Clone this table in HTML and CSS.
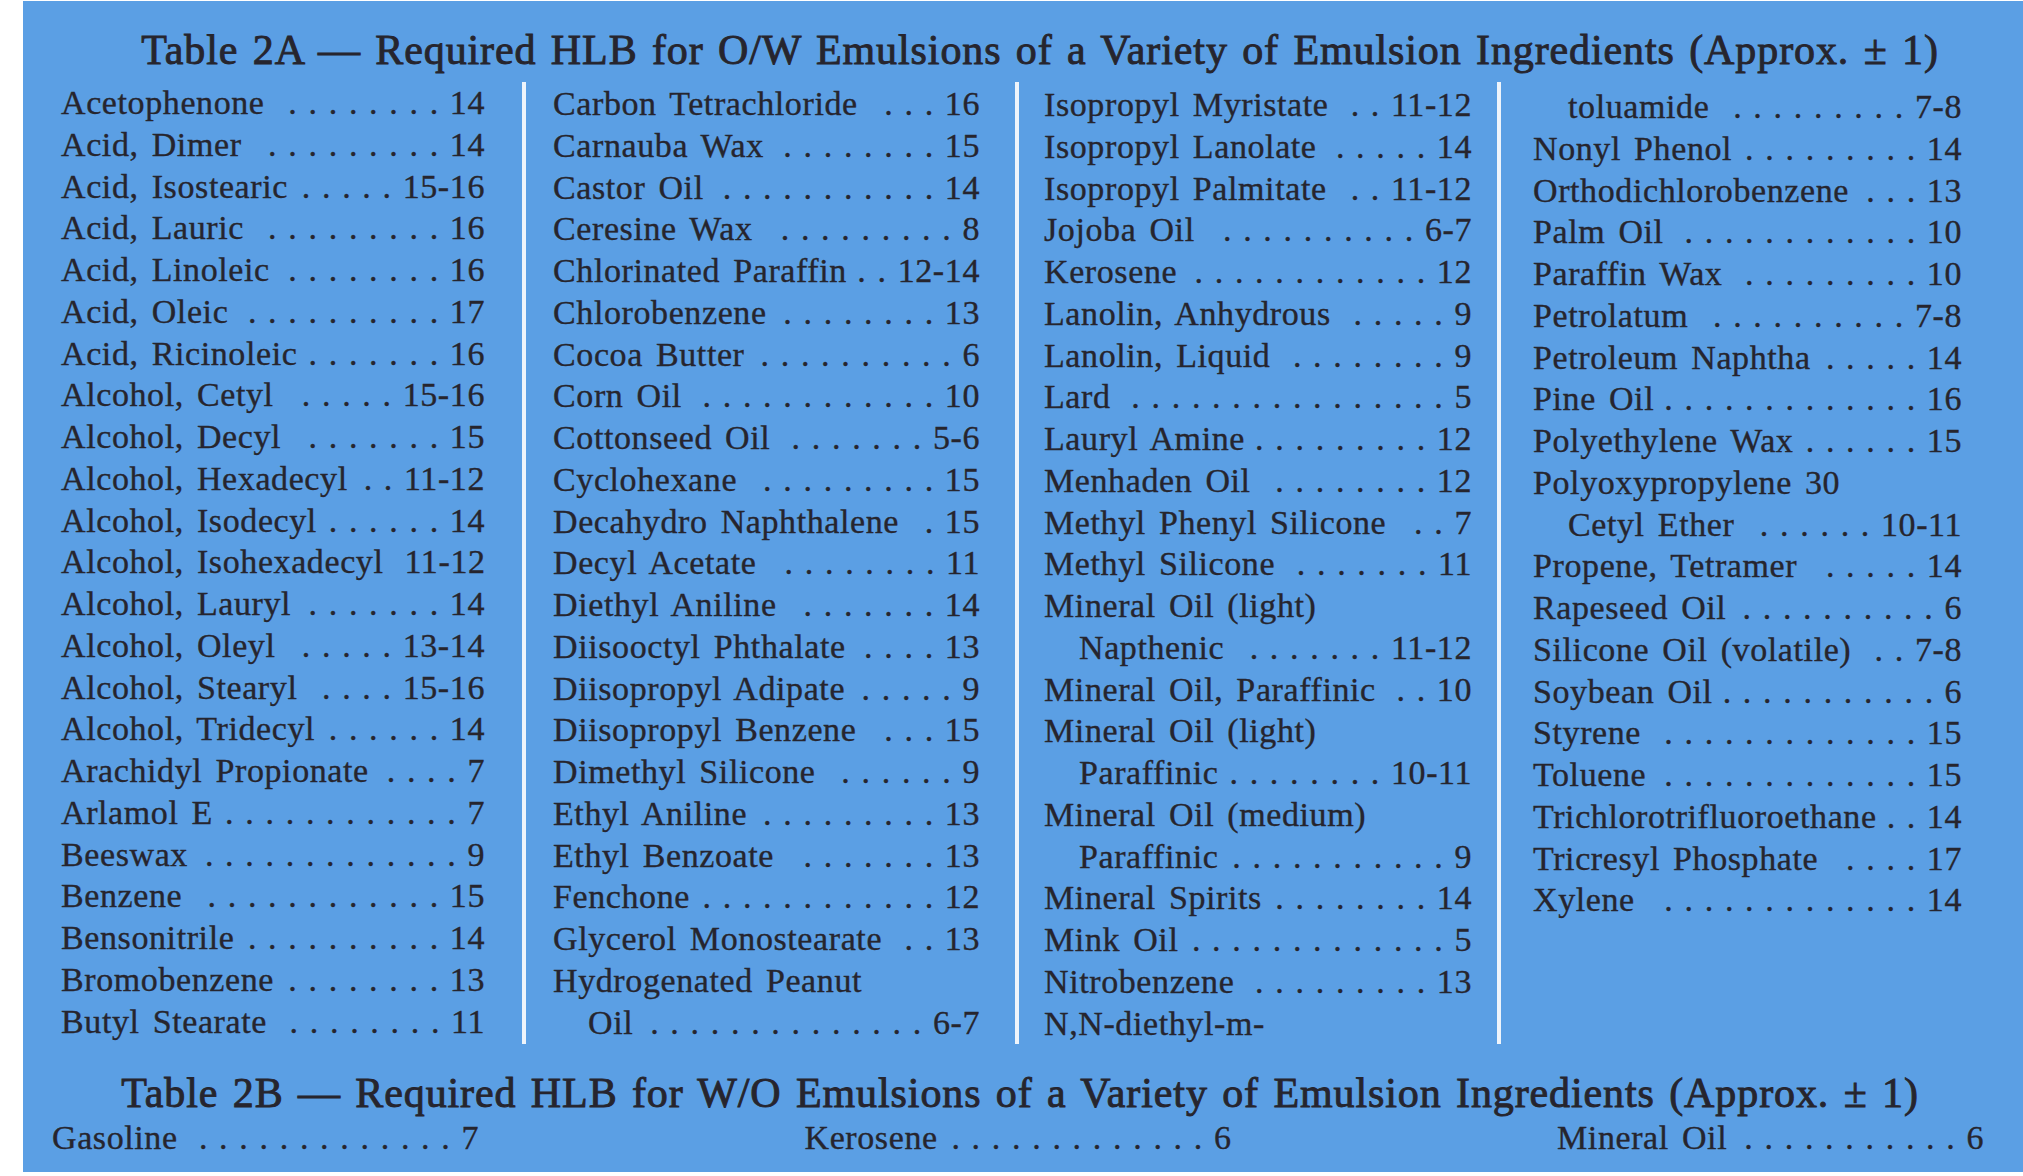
FILE: index.html
```html
<!DOCTYPE html>
<html lang="en">
<head>
<meta charset="utf-8">
<title>Required HLB Tables</title>
<link rel="stylesheet" href="styles.css">
</head>
<body>
<div class="sheet">
  <h1 class="title title-a">Table 2A — Required HLB for O/W Emulsions of a Variety of Emulsion Ingredients (Approx. ± 1)</h1>
  <div class="cols">
    <div class="col c1">
      <div class="row"><span class="name">Acetophenone</span><span class="dots">. . . . . . . .</span><span class="val">14</span></div>
      <div class="row"><span class="name">Acid, Dimer</span><span class="dots">. . . . . . . . .</span><span class="val">14</span></div>
      <div class="row"><span class="name">Acid, Isostearic</span><span class="dots">. . . .</span><span class="val">15-16</span></div>
      <div class="row"><span class="name">Acid, Lauric</span><span class="dots">. . . . . . . . .</span><span class="val">16</span></div>
      <div class="row"><span class="name">Acid, Linoleic</span><span class="dots">. . . . . . . .</span><span class="val">16</span></div>
      <div class="row"><span class="name">Acid, Oleic</span><span class="dots">. . . . . . . . . .</span><span class="val">17</span></div>
      <div class="row"><span class="name">Acid, Ricinoleic</span><span class="dots">. . . . . .</span><span class="val">16</span></div>
      <div class="row"><span class="name">Alcohol, Cetyl</span><span class="dots">. . . . .</span><span class="val">15-16</span></div>
      <div class="row"><span class="name">Alcohol, Decyl</span><span class="dots">. . . . . . .</span><span class="val">15</span></div>
      <div class="row"><span class="name">Alcohol, Hexadecyl</span><span class="dots">.</span><span class="val">11-12</span></div>
      <div class="row"><span class="name">Alcohol, Isodecyl</span><span class="dots">. . . . .</span><span class="val">14</span></div>
      <div class="row"><span class="name">Alcohol, Isohexadecyl</span><span class="dots"></span><span class="val">11-12</span></div>
      <div class="row"><span class="name">Alcohol, Lauryl</span><span class="dots">. . . . . . .</span><span class="val">14</span></div>
      <div class="row"><span class="name">Alcohol, Oleyl</span><span class="dots">. . . . .</span><span class="val">13-14</span></div>
      <div class="row"><span class="name">Alcohol, Stearyl</span><span class="dots">. . . .</span><span class="val">15-16</span></div>
      <div class="row"><span class="name">Alcohol, Tridecyl</span><span class="dots">. . . . .</span><span class="val">14</span></div>
      <div class="row"><span class="name">Arachidyl Propionate</span><span class="dots">. . .</span><span class="val">7</span></div>
      <div class="row"><span class="name">Arlamol E</span><span class="dots">. . . . . . . . . . . .</span><span class="val">7</span></div>
      <div class="row"><span class="name">Beeswax</span><span class="dots">. . . . . . . . . . . . . .</span><span class="val">9</span></div>
      <div class="row"><span class="name">Benzene</span><span class="dots">. . . . . . . . . . . . .</span><span class="val">15</span></div>
      <div class="row"><span class="name">Bensonitrile</span><span class="dots">. . . . . . . . . .</span><span class="val">14</span></div>
      <div class="row"><span class="name">Bromobenzene</span><span class="dots">. . . . . . . .</span><span class="val">13</span></div>
      <div class="row"><span class="name">Butyl Stearate</span><span class="dots">. . . . . . . .</span><span class="val">11</span></div>
    </div>
    <div class="col c2">
      <div class="row"><span class="name">Carbon Tetrachloride</span><span class="dots">. .</span><span class="val">16</span></div>
      <div class="row"><span class="name">Carnauba Wax</span><span class="dots">. . . . . . .</span><span class="val">15</span></div>
      <div class="row"><span class="name">Castor Oil</span><span class="dots">. . . . . . . . . . .</span><span class="val">14</span></div>
      <div class="row"><span class="name">Ceresine Wax</span><span class="dots">. . . . . . . . . .</span><span class="val">8</span></div>
      <div class="row"><span class="name">Chlorinated Paraffin</span><span class="dots">.</span><span class="val">12-14</span></div>
      <div class="row"><span class="name">Chlorobenzene</span><span class="dots">. . . . . . . .</span><span class="val">13</span></div>
      <div class="row"><span class="name">Cocoa Butter</span><span class="dots">. . . . . . . . . .</span><span class="val">6</span></div>
      <div class="row"><span class="name">Corn Oil</span><span class="dots">. . . . . . . . . . . .</span><span class="val">10</span></div>
      <div class="row"><span class="name">Cottonseed Oil</span><span class="dots">. . . . . . .</span><span class="val">5-6</span></div>
      <div class="row"><span class="name">Cyclohexane</span><span class="dots">. . . . . . . . .</span><span class="val">15</span></div>
      <div class="row"><span class="name">Decahydro Naphthalene</span><span class="dots"></span><span class="val">15</span></div>
      <div class="row"><span class="name">Decyl Acetate</span><span class="dots">. . . . . . . .</span><span class="val">11</span></div>
      <div class="row"><span class="name">Diethyl Aniline</span><span class="dots">. . . . . . .</span><span class="val">14</span></div>
      <div class="row"><span class="name">Diisooctyl Phthalate</span><span class="dots">. . .</span><span class="val">13</span></div>
      <div class="row"><span class="name">Diisopropyl Adipate</span><span class="dots">. . . .</span><span class="val">9</span></div>
      <div class="row"><span class="name">Diisopropyl Benzene</span><span class="dots">. . .</span><span class="val">15</span></div>
      <div class="row"><span class="name">Dimethyl Silicone</span><span class="dots">. . . . . .</span><span class="val">9</span></div>
      <div class="row"><span class="name">Ethyl Aniline</span><span class="dots">. . . . . . . .</span><span class="val">13</span></div>
      <div class="row"><span class="name">Ethyl Benzoate</span><span class="dots">. . . . . . .</span><span class="val">13</span></div>
      <div class="row"><span class="name">Fenchone</span><span class="dots">. . . . . . . . . . .</span><span class="val">12</span></div>
      <div class="row"><span class="name">Glycerol Monostearate</span><span class="dots">. .</span><span class="val">13</span></div>
      <div class="row"><span class="name">Hydrogenated Peanut</span></div>
      <div class="row ind"><span class="name">Oil</span><span class="dots">. . . . . . . . . . . . .</span><span class="val">6-7</span></div>
    </div>
    <div class="col c3">
      <div class="row"><span class="name">Isopropyl Myristate</span><span class="dots">.</span><span class="val">11-12</span></div>
      <div class="row"><span class="name">Isopropyl Lanolate</span><span class="dots">. . . . .</span><span class="val">14</span></div>
      <div class="row"><span class="name">Isopropyl Palmitate</span><span class="dots">.</span><span class="val">11-12</span></div>
      <div class="row"><span class="name">Jojoba Oil</span><span class="dots">. . . . . . . . . .</span><span class="val">6-7</span></div>
      <div class="row"><span class="name">Kerosene</span><span class="dots">. . . . . . . . . . . .</span><span class="val">12</span></div>
      <div class="row"><span class="name">Lanolin, Anhydrous</span><span class="dots">. . . .</span><span class="val">9</span></div>
      <div class="row"><span class="name">Lanolin, Liquid</span><span class="dots">. . . . . . .</span><span class="val">9</span></div>
      <div class="row"><span class="name">Lard</span><span class="dots">. . . . . . . . . . . . . . . .</span><span class="val">5</span></div>
      <div class="row"><span class="name">Lauryl Amine</span><span class="dots">. . . . . . . .</span><span class="val">12</span></div>
      <div class="row"><span class="name">Menhaden Oil</span><span class="dots">. . . . . . . .</span><span class="val">12</span></div>
      <div class="row"><span class="name">Methyl Phenyl Silicone</span><span class="dots">. .</span><span class="val">7</span></div>
      <div class="row"><span class="name">Methyl Silicone</span><span class="dots">. . . . . . .</span><span class="val">11</span></div>
      <div class="row"><span class="name">Mineral Oil (light)</span></div>
      <div class="row ind"><span class="name">Napthenic</span><span class="dots">. . . . . .</span><span class="val">11-12</span></div>
      <div class="row"><span class="name">Mineral Oil, Paraffinic</span><span class="dots">.</span><span class="val">10</span></div>
      <div class="row"><span class="name">Mineral Oil (light)</span></div>
      <div class="row ind"><span class="name">Paraffinic</span><span class="dots">. . . . . . .</span><span class="val">10-11</span></div>
      <div class="row"><span class="name">Mineral Oil (medium)</span></div>
      <div class="row ind"><span class="name">Paraffinic</span><span class="dots">. . . . . . . . . . .</span><span class="val">9</span></div>
      <div class="row"><span class="name">Mineral Spirits</span><span class="dots">. . . . . .</span><span class="val">14</span></div>
      <div class="row"><span class="name">Mink Oil</span><span class="dots">. . . . . . . . . . . .</span><span class="val">5</span></div>
      <div class="row"><span class="name">Nitrobenzene</span><span class="dots">. . . . . . . . .</span><span class="val">13</span></div>
      <div class="row"><span class="name">N,N-diethyl-m-</span></div>
    </div>
    <div class="col c4">
      <div class="row ind"><span class="name">toluamide</span><span class="dots">. . . . . . . . .</span><span class="val">7-8</span></div>
      <div class="row"><span class="name">Nonyl Phenol</span><span class="dots">. . . . . . . .</span><span class="val">14</span></div>
      <div class="row"><span class="name">Orthodichlorobenzene</span><span class="dots">. .</span><span class="val">13</span></div>
      <div class="row"><span class="name">Palm Oil</span><span class="dots">. . . . . . . . . . . . .</span><span class="val">10</span></div>
      <div class="row"><span class="name">Paraffin Wax</span><span class="dots">. . . . . . . . .</span><span class="val">10</span></div>
      <div class="row"><span class="name">Petrolatum</span><span class="dots">. . . . . . . . . .</span><span class="val">7-8</span></div>
      <div class="row"><span class="name">Petroleum Naphtha</span><span class="dots">. . . .</span><span class="val">14</span></div>
      <div class="row"><span class="name">Pine Oil</span><span class="dots">. . . . . . . . . . . .</span><span class="val">16</span></div>
      <div class="row"><span class="name">Polyethylene Wax</span><span class="dots">. . . . .</span><span class="val">15</span></div>
      <div class="row"><span class="name">Polyoxypropylene 30</span></div>
      <div class="row ind"><span class="name">Cetyl Ether</span><span class="dots">. . . . .</span><span class="val">10-11</span></div>
      <div class="row"><span class="name">Propene, Tetramer</span><span class="dots">. . . .</span><span class="val">14</span></div>
      <div class="row"><span class="name">Rapeseed Oil</span><span class="dots">. . . . . . . . . .</span><span class="val">6</span></div>
      <div class="row"><span class="name">Silicone Oil (volatile)</span><span class="dots">. .</span><span class="val">7-8</span></div>
      <div class="row"><span class="name">Soybean Oil</span><span class="dots">. . . . . . . . . .</span><span class="val">6</span></div>
      <div class="row"><span class="name">Styrene</span><span class="dots">. . . . . . . . . . . . .</span><span class="val">15</span></div>
      <div class="row"><span class="name">Toluene</span><span class="dots">. . . . . . . . . . . . .</span><span class="val">15</span></div>
      <div class="row"><span class="name">Trichlorotrifluoroethane</span><span class="dots"></span><span class="val">14</span></div>
      <div class="row"><span class="name">Tricresyl Phosphate</span><span class="dots">. . . .</span><span class="val">17</span></div>
      <div class="row"><span class="name">Xylene</span><span class="dots">. . . . . . . . . . . . . .</span><span class="val">14</span></div>
    </div>
  </div>
  <h2 class="title title-b">Table 2B — Required HLB for W/O Emulsions of a Variety of Emulsion Ingredients (Approx. ± 1)</h2>
  <div class="wo">
    <div class="row"><span class="name">Gasoline</span><span class="dots">. . . . . . . . . . . . .</span><span class="val">7</span></div>
    <div class="row"><span class="name">Kerosene</span><span class="dots">. . . . . . . . . . . . .</span><span class="val">6</span></div>
    <div class="row"><span class="name">Mineral Oil</span><span class="dots">. . . . . . . . . . . .</span><span class="val">6</span></div>
  </div>
</div>
<script src="script.js"></script>
</body>
</html>
```
FILE: styles.css
```css
html, body {
  margin: 0;
  padding: 0;
  background: #ffffff;
}

body {
  font-family: "Liberation Serif", "Times New Roman", serif;
  color: #26252e;
}

.sheet {
  box-sizing: border-box;
  width: 2000px;
  height: 1171px;
  margin: 1px 0 0 23px;
  padding: 25px 0 0 0;
  background: #5b9fe4;
}

.title {
  margin: 0;
  font-size: 42px;
  line-height: 48px;
  font-weight: normal;
  letter-spacing: 0.9px;
  word-spacing: 3px;
  text-align: center;
  white-space: nowrap;
  -webkit-text-stroke: 0.9px #26252e;
}

.title-a {
  padding-left: 34px;
}

.title-b {
  margin-top: 25px;
  padding-right: 6px;
}

.cols {
  display: flex;
  align-items: stretch;
  margin-top: 8px;
  padding-left: 38px;
}

.c1 { width: 424px; }
.c2 { width: 427px; margin-left: 37px; padding-left: 27px; border-left: 4px solid #eef4fb; padding-top: 1px; }
.c3 { width: 428px; margin-left: 35px; padding-left: 25px; border-left: 4px solid #eef4fb; padding-top: 2px; }
.c4 { width: 429px; margin-left: 25px; padding-left: 32px; border-left: 4px solid #eef4fb; padding-top: 4px; }

.row {
  display: flex;
  align-items: baseline;
  font-size: 34px;
  line-height: 41.75px;
  letter-spacing: 0.6px;
  word-spacing: 4px;
  white-space: nowrap;
  -webkit-text-stroke: 0.35px #26252e;
}

.row.ind {
  padding-left: 35px;
}

.name {
  flex: none;
  padding-right: 10px;
}

.dots {
  flex: 1 1 0;
  min-width: 0;
  overflow: hidden;
  text-align: right;
  word-spacing: 2px;
  white-space: nowrap;
}

.val {
  flex: none;
  padding-left: 11px;
}

.wo {
  display: flex;
  justify-content: space-between;
  padding: 0 39px 0 29px;
}

.wo .row {
  width: 427px;
}
```
FILE: script.js
```js
// Fill each dot leader with as many dots as fit in its space.
document.querySelectorAll('.dots').forEach(function (el) {
  var n = 0;
  el.textContent = '';
  while (n < 40) {
    var next = Array(n + 2).join('. ').trim();
    el.textContent = next;
    if (el.scrollWidth > el.clientWidth) {
      el.textContent = Array(n + 1).join('. ').trim();
      break;
    }
    n++;
  }
});
```
